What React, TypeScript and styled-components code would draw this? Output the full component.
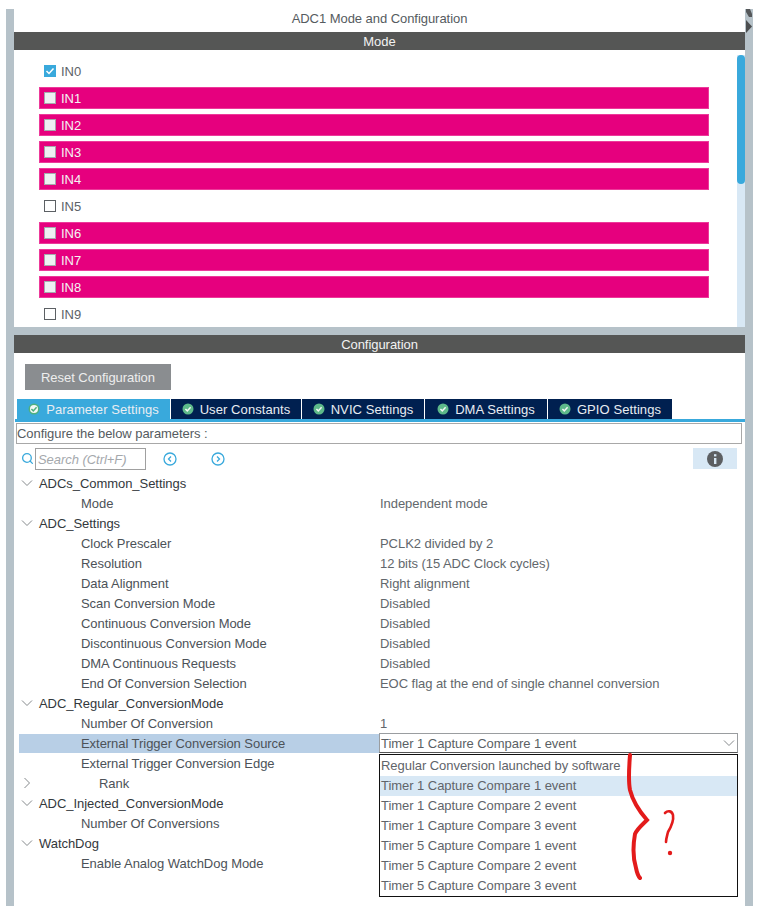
import React from "react";
import styled, { createGlobalStyle } from "styled-components";
import { Search } from "lucide-react";

const GlobalStyle = createGlobalStyle`
  html, body {
    margin: 0;
    background: #fff;
  }
  body {
    padding: 9px 0 0 6px;
    font-family: "Liberation Sans", Arial, sans-serif;
    font-size: 13px;
    letter-spacing: -0.05px;
  }
`;

const Shell = styled.div`
  position: relative;
  box-sizing: border-box;
  width: 747px;
  height: 897px;
  border-left: 8px solid #b6c2c9;
  border-right: 8px solid #b6c2c9;
  background: #b6c2c9;
  display: flex;
  flex-direction: column;
`;

const Grip = styled.svg`
  position: absolute;
  top: 0;
  right: -8px;
  width: 8px;
  height: 28px;
`;

const Title = styled.div`
  height: 23px;
  line-height: 19px;
  background: #fff;
  text-align: center;
  color: #555b60;
`;

const SectionBar = styled.div`
  height: 18px;
  line-height: 19px;
  background: #555655;
  color: #f2f2f2;
  text-align: center;
`;

const ModePane = styled.div`
  height: 277px;
  margin-bottom: 8px;
  background: #fff;
  display: flex;
  overflow: hidden;
`;

const ChannelList = styled.div`
  flex: 1;
  padding: 10px 28px 0 25px;
  display: flex;
  flex-direction: column;
  gap: 5px;
`;

const ChannelRow = styled.div<{ $conflict?: boolean }>`
  flex: none;
  height: 22px;
  line-height: 23px;
  display: flex;
  align-items: center;
  gap: 5px;
  padding-left: 5px;
  box-sizing: border-box;
  background: ${(p) => (p.$conflict ? "#e6007e" : "transparent")};
  color: ${(p) => (p.$conflict ? "#f4f4f4" : "#5c6268")};
  box-shadow: ${(p) => (p.$conflict ? "inset 0 0 0 1px #ec3a9a" : "none")};
`;

const Box = styled.span<{ $state: "on" | "off" | "blocked" }>`
  box-sizing: border-box;
  width: 12px;
  height: 12px;
  display: flex;
  align-items: center;
  justify-content: center;
  background: ${(p) =>
    p.$state === "on" ? "#39a9dc" : p.$state === "blocked" ? "#eef0f2" : "#fff"};
  border: 1px solid
    ${(p) =>
      p.$state === "on" ? "#39a9dc" : p.$state === "blocked" ? "#a5a9ad" : "#5c6064"};
`;

const ScrollTrack = styled.div`
  flex: none;
  width: 8px;
  margin-top: 5px;
  background: #d8e8f5;
`;

const ScrollThumb = styled.div`
  height: 129px;
  background: #39a9dc;
  border-radius: 4px;
`;

const ConfigPane = styled.div`
  flex: 1;
  position: relative;
  background: #fff;
`;

const ResetButton = styled.button`
  display: block;
  margin: 11px 0 9px 11px;
  padding: 0;
  width: 146px;
  height: 26px;
  border: none;
  background: #8a8d90;
  color: #eee;
  font: inherit;
  letter-spacing: inherit;
`;

const TabStrip = styled.div`
  display: flex;
  gap: 1px;
  margin-left: 1px;
  padding-left: 2px;
  border-bottom: 3px solid #39a9dc;
`;

const Tab = styled.div<{ $active?: boolean; $width: number }>`
  width: ${(p) => p.$width}px;
  height: 20px;
  display: flex;
  align-items: center;
  justify-content: center;
  gap: 6px;
  background: ${(p) => (p.$active ? "#39a9dc" : "#002050")};
  color: #e8edf2;
  letter-spacing: 0.08px;
`;

const Hint = styled.div`
  box-sizing: border-box;
  height: 21px;
  line-height: 20px;
  margin: 1px 3px 0 2px;
  border: 1px solid #a8a8a8;
  color: #555b60;
`;

const SearchRow = styled.div`
  height: 23px;
  margin: 3px 8px 3px 7px;
  display: flex;
  align-items: center;
`;

const SearchInput = styled.div`
  box-sizing: border-box;
  width: 111px;
  height: 22px;
  line-height: 21px;
  margin-left: 1px;
  padding-left: 2px;
  border: 1px solid #a0a0a0;
  color: #a4a8ac;
  font-style: italic;
`;

const NavButton = styled.svg`
  width: 14px;
  height: 14px;
  margin-left: 17px;
  & + & {
    margin-left: 34px;
  }
`;

const InfoBox = styled.div`
  width: 44px;
  height: 21px;
  margin-left: auto;
  background: #d8e8f5;
  display: flex;
  align-items: center;
  justify-content: center;
`;

const Tree = styled.div`
  position: relative;
  margin-left: 5px;
  width: 719px;
`;

const TreeRow = styled.div`
  height: 20px;
  line-height: 21px;
  display: grid;
  grid-template-columns: 361px 1fr;
  align-items: center;
`;

const NameCell = styled.div<{ $selected?: boolean; $group?: boolean }>`
  height: ${(p) => (p.$selected ? "19px" : "20px")};
  display: flex;
  align-items: center;
  background: ${(p) => (p.$selected ? "#b8cfe6" : "transparent")};
  color: ${(p) => (p.$group ? "#33383c" : "#4c5258")};
`;

const Caret = styled.span`
  flex: none;
  width: 20px;
  display: flex;
  padding-left: 2px;
  box-sizing: border-box;
`;

const NameText = styled.span<{ $indent: number }>`
  margin-left: ${(p) => p.$indent}px;
`;

const ValueCell = styled.div`
  color: #62676c;
`;

const SelectField = styled.div`
  box-sizing: border-box;
  height: 20px;
  margin-left: -1px;
  padding: 0 2px 0 1px;
  border: 1px solid #9a9da0;
  border-bottom-color: #555;
  display: flex;
  align-items: center;
  justify-content: space-between;
  color: #5a5f64;
`;

const Dropdown = styled.div`
  position: absolute;
  top: 281px;
  left: 360px;
  box-sizing: border-box;
  width: 359px;
  height: 143px;
  padding-top: 1px;
  border: 1px solid #111;
  background: #fff;
`;

const Option = styled.div<{ $active?: boolean }>`
  height: 20px;
  line-height: 20px;
  padding-left: 1px;
  background: ${(p) => (p.$active ? "#d8e8f5" : "transparent")};
  color: #5f646a;
`;

const Scribble = styled.svg`
  position: absolute;
  left: 0;
  top: 0;
  width: 759px;
  height: 913px;
  pointer-events: none;
`;

const channels: { name: string; state: "on" | "off" | "blocked" }[] = [
  { name: "IN0", state: "on" },
  { name: "IN1", state: "blocked" },
  { name: "IN2", state: "blocked" },
  { name: "IN3", state: "blocked" },
  { name: "IN4", state: "blocked" },
  { name: "IN5", state: "off" },
  { name: "IN6", state: "blocked" },
  { name: "IN7", state: "blocked" },
  { name: "IN8", state: "blocked" },
  { name: "IN9", state: "off" },
];

const tabs = [
  { label: "Parameter Settings", width: 153, active: true },
  { label: "User Constants", width: 130 },
  { label: "NVIC Settings", width: 122 },
  { label: "DMA Settings", width: 122 },
  { label: "GPIO Settings", width: 124 },
];

type Param = { name: string; value?: string; group?: boolean; caret?: "down" | "right"; sub?: boolean; selected?: boolean };

const params: Param[] = [
  { name: "ADCs_Common_Settings", group: true, caret: "down" },
  { name: "Mode", value: "Independent mode" },
  { name: "ADC_Settings", group: true, caret: "down" },
  { name: "Clock Prescaler", value: "PCLK2 divided by 2" },
  { name: "Resolution", value: "12 bits (15 ADC Clock cycles)" },
  { name: "Data Alignment", value: "Right alignment" },
  { name: "Scan Conversion Mode", value: "Disabled" },
  { name: "Continuous Conversion Mode", value: "Disabled" },
  { name: "Discontinuous Conversion Mode", value: "Disabled" },
  { name: "DMA Continuous Requests", value: "Disabled" },
  { name: "End Of Conversion Selection", value: "EOC flag at the end of single channel conversion" },
  { name: "ADC_Regular_ConversionMode", group: true, caret: "down" },
  { name: "Number Of Conversion", value: "1" },
  { name: "External Trigger Conversion Source", selected: true },
  { name: "External Trigger Conversion Edge" },
  { name: "Rank", caret: "right", sub: true },
  { name: "ADC_Injected_ConversionMode", group: true, caret: "down" },
  { name: "Number Of Conversions" },
  { name: "WatchDog", group: true, caret: "down" },
  { name: "Enable Analog WatchDog Mode" },
];

const triggerOptions = [
  "Regular Conversion launched by software",
  "Timer 1 Capture Compare 1 event",
  "Timer 1 Capture Compare 2 event",
  "Timer 1 Capture Compare 3 event",
  "Timer 5 Capture Compare 1 event",
  "Timer 5 Capture Compare 2 event",
  "Timer 5 Capture Compare 3 event",
];

const TabCheck = ({ active }: { active?: boolean }) => (
  <svg width="12" height="12" viewBox="0 0 12 12">
    <circle cx="6" cy="6" r="5.5" fill={active ? "#4fb07f" : "#5db98a"} />
    {active && <circle cx="6" cy="6" r="4" fill="#f2f8f5" />}
    <path
      d="M3.4 6 5.3 7.9 8.6 4.3"
      fill="none"
      stroke={active ? "#4fb07f" : "#f4f8f6"}
      strokeWidth="1.5"
    />
  </svg>
);

const Nav = ({ back }: { back?: boolean }) => (
  <NavButton viewBox="0 0 14 14">
    <circle cx="7" cy="7" r="6" fill="none" stroke="#39a9dc" strokeWidth="1.3" />
    <path
      d={back ? "M8 4.5 5.5 7 8 9.5" : "M6 4.5 8.5 7 6 9.5"}
      fill="none"
      stroke="#39a9dc"
      strokeWidth="1.3"
    />
  </NavButton>
);

const ChevronDownIcon = () => (
  <svg width="12" height="12" viewBox="0 0 12 12">
    <path d="M1 3.5 6 8.5 11 3.5" fill="none" stroke="#85898c" strokeWidth="1" />
  </svg>
);

const ChevronRightIcon = () => (
  <svg width="12" height="12" viewBox="0 0 12 12">
    <path d="M3.5 1 8.5 6 3.5 11" fill="none" stroke="#85898c" strokeWidth="1" />
  </svg>
);

const App = () => {
  return (
    <>
      <GlobalStyle />
      <Shell>
        <Grip viewBox="0 0 8 28">
          <path d="M1 0h4l2 5v3h-3l-3-5z" fill="#55585a" />
          <path d="M1 11l6 6.5-6 6.5z" fill="#4c4e50" />
        </Grip>
        <Title>ADC1 Mode and Configuration</Title>
        <SectionBar>Mode</SectionBar>
        <ModePane>
          <ChannelList>
            {channels.map((c) => (
              <ChannelRow key={c.name} $conflict={c.state === "blocked"}>
                <Box $state={c.state}>
                  {c.state === "on" && (
                    <svg width="10" height="10" viewBox="0 0 10 10">
                      <path d="M1.5 5 4 7.5 8.5 2.5" fill="none" stroke="#fff" strokeWidth="1.5" />
                    </svg>
                  )}
                </Box>
                {c.name}
              </ChannelRow>
            ))}
          </ChannelList>
          <ScrollTrack>
            <ScrollThumb />
          </ScrollTrack>
        </ModePane>
        <SectionBar>Configuration</SectionBar>
        <ConfigPane>
          <ResetButton>Reset Configuration</ResetButton>
          <TabStrip>
            {tabs.map((t) => (
              <Tab key={t.label} $active={t.active} $width={t.width}>
                <TabCheck active={t.active} />
                {t.label}
              </Tab>
            ))}
          </TabStrip>
          <Hint>Configure the below parameters :</Hint>
          <SearchRow>
            <Search size={13} color="#39a9dc" strokeWidth={2.4} />
            <SearchInput>Search (Ctrl+F)</SearchInput>
            <Nav back />
            <Nav />
            <InfoBox>
              <svg width="16" height="16" viewBox="0 0 16 16">
                <circle cx="8" cy="8" r="8" fill="#5c5f62" />
                <rect x="7" y="7" width="2.4" height="6" fill="#d8e8f5" />
                <rect x="7" y="3.2" width="2.4" height="2.2" fill="#d8e8f5" />
              </svg>
            </InfoBox>
          </SearchRow>
          <Tree>
            {params.map((p) => (
              <TreeRow key={p.name}>
                <NameCell $selected={p.selected} $group={p.group}>
                  <Caret>
                    {p.caret === "down" && <ChevronDownIcon />}
                    {p.caret === "right" && <ChevronRightIcon />}
                  </Caret>
                  <NameText $indent={p.group ? 0 : p.sub ? 60 : 42}>{p.name}</NameText>
                </NameCell>
                {p.selected ? (
                  <SelectField>
                    Timer 1 Capture Compare 1 event
                    <ChevronDownIcon />
                  </SelectField>
                ) : (
                  <ValueCell>{p.value}</ValueCell>
                )}
              </TreeRow>
            ))}
            <Dropdown>
              {triggerOptions.map((o, i) => (
                <Option key={o} $active={i === 1}>
                  {o}
                </Option>
              ))}
            </Dropdown>
          </Tree>
        </ConfigPane>
      </Shell>
      <Scribble viewBox="0 0 759 913">
        <path
          d="M630 755 C629 768 628 780 630 790 C633 802 640 812 647 820 C642 825 637 829 635 834 C633 845 633 858 636 868 C637 873 638 876 640 878"
          fill="none"
          stroke="#e31b1b"
          strokeWidth="4"
          strokeLinecap="round"
        />
        <path
          d="M665 813 C668 810 672 811 673 815 C674 821 671 827 668 832 C667 836 666 839 666 842"
          fill="none"
          stroke="#e31b1b"
          strokeWidth="2.6"
          strokeLinecap="round"
        />
        <circle cx="670" cy="853" r="2.2" fill="#e31b1b" />
      </Scribble>
    </>
  );
};

export default App;
